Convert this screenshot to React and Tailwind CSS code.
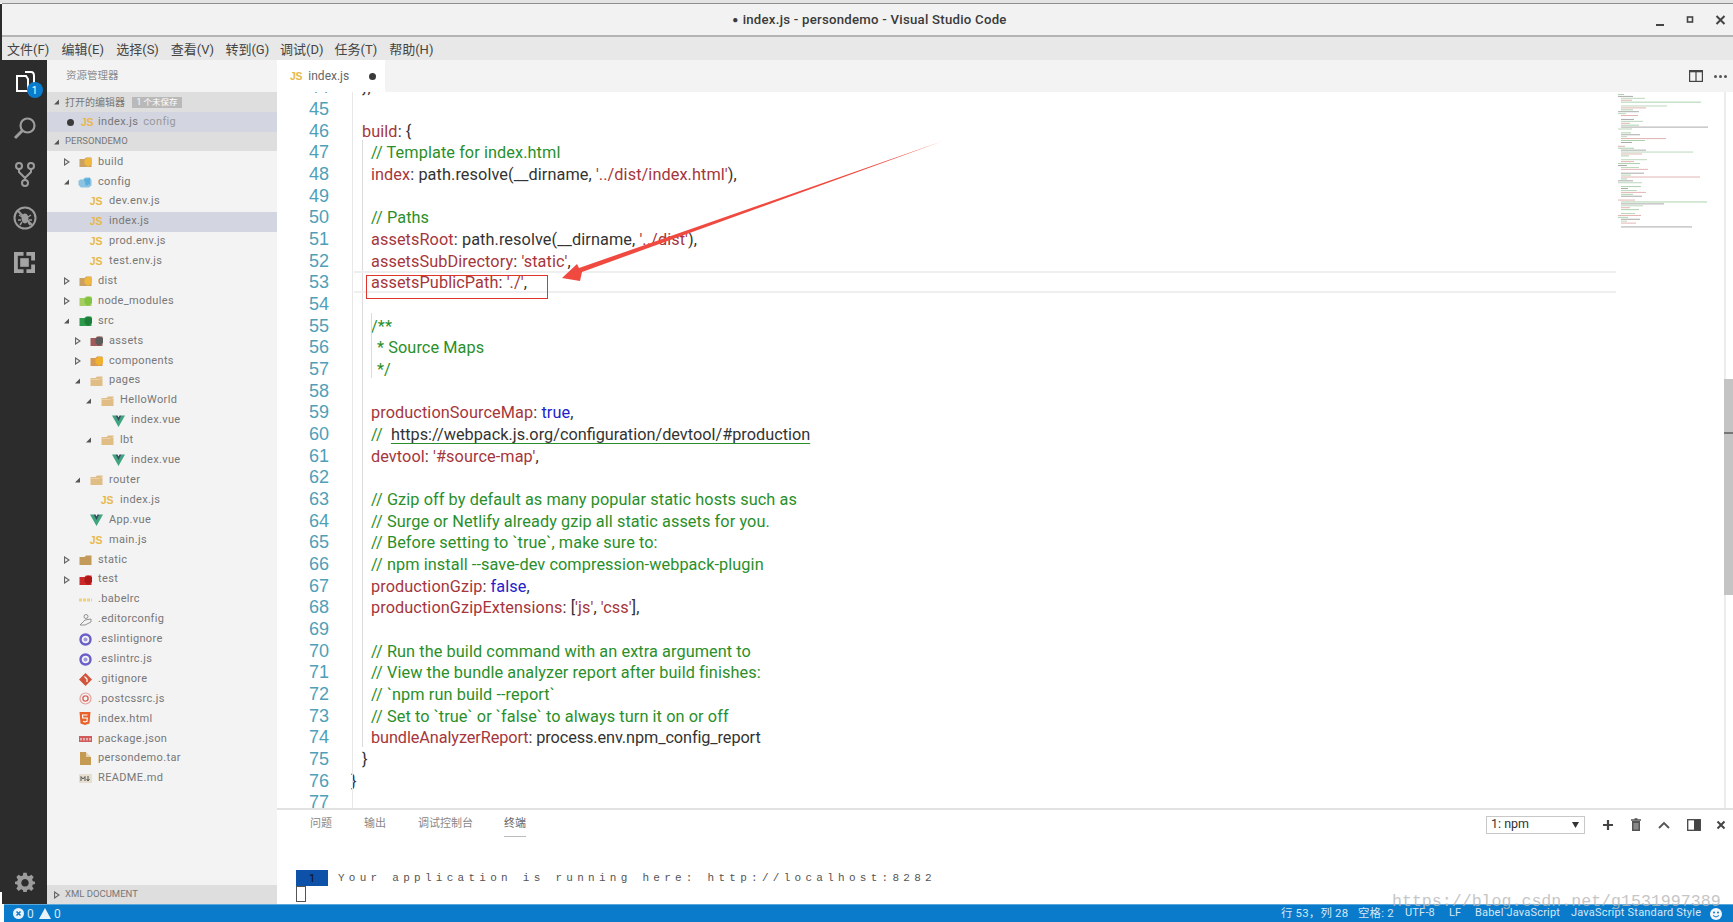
import React from "react";

const Tri = ({ open }) => (
  <svg width="6" height="8" viewBox="0 0 6 8" className="shrink-0">
    {open ? <path d="M0 6.5 L5 1.5 V6.5 Z" fill="#555" /> : <path d="M0.5 1 L5 4 L0.5 7 Z" fill="none" stroke="#666" strokeWidth="1.2" />}
  </svg>
);

const JS = () => (
  <span className="font-['Liberation_Sans'] font-bold text-[10.5px] text-[#e8b84a] shrink-0 leading-none tracking-tight whitespace-nowrap">JS</span>
);
const Vue = () => (
  <svg width="13" height="12" viewBox="0 0 13 12" className="shrink-0"><path d="M0 0.5 H3.5 L6.5 5 L9.5 0.5 H13 L6.5 12 Z" fill="#3fa57f" /><path d="M3.5 0.5 H5.5 L6.5 2.5 L7.5 0.5 H9.5 L6.5 6 Z" fill="#2f4a5c" /></svg>
);
const Folder = ({ c = "#e0bd85", c2, open }) => (
  <svg width="13" height="12" viewBox="0 0 13 12" className="shrink-0">
    <path d="M0.5 3 V11 H12.5 V1.5 H7 L5.5 3 Z" fill={c} />
    {open && <path d="M0.5 4.5 H9 L12.5 3 V4 H1 Z" fill="#f4e6cf" />}
    {c2 && <path d="M5.5 4 L9 1.5 L13 3 V8 L9 11 L5.5 8 Z" fill={c2} />}
  </svg>
);
const Cloud = () => (
  <svg width="14" height="12" viewBox="0 0 14 12" className="shrink-0">
    <path d="M0.5 5 L2 3.5 H5 L7 1.5 H12 L13.5 4 V9.5 L11 11.5 H3 L0.5 9 Z" fill="#8cc3e0" />
    <path d="M6 3 L12 2 V8 L8 10 Z" fill="#5aaedc" />
  </svg>
);
const Dot = ({ c }) => (
  <svg width="13" height="13" viewBox="0 0 13 13" className="shrink-0"><circle cx="6.5" cy="6.5" r="5" fill="none" stroke={c} strokeWidth="2.4" /><circle cx="6.5" cy="6.5" r="2" fill={c} opacity=".6" /></svg>
);
const Git = () => (
  <svg width="13" height="13" viewBox="0 0 13 13" className="shrink-0"><path d="M6.5 0 L13 6.5 L6.5 13 L0 6.5 Z" fill="#d2543a" /><path d="M5.5 3.5 L8 6 V9" stroke="#fff" strokeWidth="1.2" fill="none" /></svg>
);
const Post = () => (
  <svg width="13" height="13" viewBox="0 0 13 13" className="shrink-0"><circle cx="6.5" cy="6.5" r="5.5" fill="none" stroke="#e4a09a" strokeWidth="1.2" /><circle cx="6.5" cy="6.5" r="2.6" fill="none" stroke="#d9655c" strokeWidth="1.4" /></svg>
);
const Html = () => (
  <svg width="12" height="13" viewBox="0 0 12 13" className="shrink-0"><path d="M0.5 0 H11.5 L10.5 11.5 L6 13 L1.5 11.5 Z" fill="#e8622c" /><path d="M8.5 3 H3.5 L3.7 6 H8.3 L8 9.3 L6 10 L4 9.3" fill="none" stroke="#fff" strokeWidth="1.1" /></svg>
);
const Npm = () => (
  <svg width="13" height="6" viewBox="0 0 13 6" className="shrink-0"><rect width="13" height="6" fill="#cf5b5b" /><path d="M2 4.5 V2 M5 4.5 V2 M8 4.5 V2 M11 4.5 V2" stroke="#fff" strokeWidth="1" /></svg>
);
const Tar = () => (
  <svg width="11" height="13" viewBox="0 0 11 13" className="shrink-0"><path d="M0 0 H6 V5 H11 V13 H0 Z" fill="#c59a52" /><path d="M6 0 L11 5 H6 Z" fill="#e4d3ad" /></svg>
);
const Md = () => (
  <svg width="13" height="9" viewBox="0 0 13 9" className="shrink-0"><rect width="13" height="9" fill="#e6dfd0" /><path d="M2 7 V2.5 L4 5 L6 2.5 V7 M9 2 V7 M7.5 5 L9 7 L10.5 5" fill="none" stroke="#555" strokeWidth="1" /></svg>
);
const Babel = () => (
  <svg width="13" height="6" viewBox="0 0 13 6" className="shrink-0"><path d="M0 3 H13" stroke="#efd27a" strokeWidth="3" strokeDasharray="3 1" /></svg>
);
const Editor = () => (
  <svg width="13" height="13" viewBox="0 0 13 13" className="shrink-0" fill="none" stroke="#888" strokeWidth="0.9"><circle cx="7" cy="3.5" r="2" /><path d="M1 12 L6 7 L12 6 V9 L6 12 Z" /></svg>
);

const rows = [
  [0, "t", "build", <Folder c="#c9a263" c2="#f0b93e" />],
  [0, "o", "config", <Cloud />],
  [1, "", "dev.env.js", <JS />],
  [1, "", "index.js", <JS />, true],
  [1, "", "prod.env.js", <JS />],
  [1, "", "test.env.js", <JS />],
  [0, "t", "dist", <Folder c="#c9a263" c2="#f0b93e" />],
  [0, "t", "node_modules", <Folder c="#a5cd62" c2="#82c341" />],
  [0, "o", "src", <Folder c="#2e9a4c" c2="#1c7e39" />],
  [1, "t", "assets", <Folder c="#a05a5a" c2="#5c5c5c" />],
  [1, "t", "components", <Folder c="#d69a55" c2="#f0b030" />],
  [1, "o", "pages", <Folder open />],
  [2, "o", "HelloWorld", <Folder open />],
  [3, "", "index.vue", <Vue />],
  [2, "o", "lbt", <Folder open />],
  [3, "", "index.vue", <Vue />],
  [1, "o", "router", <Folder open />],
  [2, "", "index.js", <JS />],
  [1, "", "App.vue", <Vue />],
  [1, "", "main.js", <JS />],
  [0, "t", "static", <Folder c="#c49a5a" />],
  [0, "t", "test", <Folder c="#cc2a2a" c2="#b01818" />],
  [0, "", ".babelrc", <Babel />],
  [0, "", ".editorconfig", <Editor />],
  [0, "", ".eslintignore", <Dot c="#6a5fc9" />],
  [0, "", ".eslintrc.js", <Dot c="#6a5fc9" />],
  [0, "", ".gitignore", <Git />],
  [0, "", ".postcssrc.js", <Post />],
  [0, "", "index.html", <Html />],
  [0, "", "package.json", <Npm />],
  [0, "", "persondemo.tar", <Tar />],
  [0, "", "README.md", <Md />],
];

const Row = ({ lvl, kind, name, icon, sel }) => (
  <div className={`h-[19.9px] flex items-center text-[11px] tracking-[0.35px] text-[#777] whitespace-nowrap ${sel ? "bg-[#d3d5e1]" : ""}`} style={{ paddingLeft: 17 + lvl * 11 }}>
    <span className="w-[14px] shrink-0 flex items-center">{kind && <Tri open={kind === "o"} />}</span>
    <span className="w-[14px] shrink-0 flex items-center justify-center">{icon}</span>
    <span className="ml-[6px]">{name}</span>
  </div>
);

const K = ({ children }) => <span className="text-[#a5363c]">{children}</span>;
const S = ({ children }) => <span className="text-[#a5363c]">{children}</span>;
const C = ({ children }) => <span className="text-[#2a8f2a]">{children}</span>;
const B = ({ children }) => <span className="text-[#2222c8]">{children}</span>;

const code = [
  [44, 11, <>{"},"}</>],
  [45, 0, null],
  [46, 11, <><K>build</K>: {"{"}</>],
  [47, 20, <C>// Template for index.html</C>],
  [48, 20, <><K>index</K>: path.resolve(__dirname, <S>'../dist/index.html'</S>),</>],
  [49, 0, null],
  [50, 20, <C>// Paths</C>],
  [51, 20, <><K>assetsRoot</K>: path.resolve(__dirname, <S>'../dist'</S>),</>],
  [52, 20, <><K>assetsSubDirectory</K>: <S>'static'</S>,</>],
  [53, 20, <><K>assetsPublicPath</K>: <S>'./'</S>,</>],
  [54, 0, null],
  [55, 20, <C>/**</C>],
  [56, 26, <C>* Source Maps</C>],
  [57, 26, <C>*/</C>],
  [58, 0, null],
  [59, 20, <><K>productionSourceMap</K>: <B>true</B>,</>],
  [60, 20, <><C>// </C><span className="ml-[4px] tracking-[0px] text-[#333] underline decoration-[#2a8f2a] underline-offset-[3px]">https://webpack.js.org/configuration/devtool/#production</span></>],
  [61, 20, <><K>devtool</K>: <S>'#source-map'</S>,</>],
  [62, 0, null],
  [63, 20, <C>// Gzip off by default as many popular static hosts such as</C>],
  [64, 20, <C>// Surge or Netlify already gzip all static assets for you.</C>],
  [65, 20, <C>// Before setting to `true`, make sure to:</C>],
  [66, 20, <C>// npm install --save-dev compression-webpack-plugin</C>],
  [67, 20, <><K>productionGzip</K>: <B>false</B>,</>],
  [68, 20, <><K>productionGzipExtensions</K>: [<S>'js'</S>, <S>'css'</S>],</>],
  [69, 0, null],
  [70, 20, <C>// Run the build command with an extra argument to</C>],
  [71, 20, <C>// View the bundle analyzer report after build finishes:</C>],
  [72, 20, <C>// `npm run build --report`</C>],
  [73, 20, <C>// Set to `true` or `false` to always turn it on or off</C>],
  [74, 20, <span className="tracking-[-0.1px]"><K>bundleAnalyzerReport</K>: process.env.npm_config_report</span>],
  [75, 11, <>{"}"}</>],
  [76, 0, <>{"}"}</>],
  [77, 0, null],
];

const miniColors = ["#4a9e4a", "#c25a5a", "#6aa86a", "#444"];
const mini = [];
for (let i = 0; i < 70; i++) {
  const seed = (i * 37) % 7;
  if (seed === 3) continue;
  const w = 6 + ((i * 53) % 22) + (i % 13 === 4 ? 60 : 0) + (i % 17 === 6 ? 30 : 0);
  mini.push([i % 9 < 2 ? 2 : 5, 2 + i * 1.92, w, miniColors[(i * 7) % 4]]);
}

const Menu = ["文件(F)", "编辑(E)", "选择(S)", "查看(V)", "转到(G)", "调试(D)", "任务(T)", "帮助(H)"];

export default function App() {
  return (
    <div className="relative w-[1733px] h-[922px] overflow-hidden bg-white font-['Roboto','Noto_Sans_CJK_SC',sans-serif] text-[#333]">
      <div className="h-[3px] bg-[#e4e4e4]" />
      <div className="h-px bg-[#8f8f8f] ml-[2px]" />
      <div className="flex h-[918px]">
        <div className="w-[2px] bg-[#2c2c2c] h-[888px] shrink-0" />
        <div className="flex-1 flex flex-col min-w-0">
          {/* title bar */}
          <div className="relative h-[33px] bg-[#f2f2f2] border-b-2 border-[#b4b4b4] flex items-center justify-center pl-[4px] shrink-0">
            <span className="text-[13.2px] font-medium text-[#3a3a3a] tracking-[0.25px] whitespace-nowrap"><span className="text-[10px] mr-[4px] align-[1px] font-['Liberation_Sans']">●</span>index.js - persondemo - Visual Studio Code</span>
            <div className="absolute right-[6px] top-0 bottom-0 flex items-center gap-[17px]">
              <svg width="13" height="14" viewBox="0 0 13 14"><path d="M2 12 H10" stroke="#444" strokeWidth="2" /></svg>
              <svg width="13" height="14" viewBox="0 0 13 14"><rect x="3.5" y="4" width="5" height="5" fill="none" stroke="#444" strokeWidth="1.6" /></svg>
              <svg width="13" height="14" viewBox="0 0 13 14"><path d="M2.5 3 L10.5 11 M10.5 3 L2.5 11" stroke="#444" strokeWidth="2" /></svg>
            </div>
          </div>
          {/* menu */}
          <div className="h-[23px] bg-[#e8e8e8] flex items-center gap-[10.6px] pl-[5px] pt-[2px] text-[13px] text-[#444] shrink-0">
            {Menu.map((m) => <span key={m} className="w-[44px] whitespace-nowrap">{m}</span>)}
          </div>
          <div className="flex-1 flex min-h-0">
            {/* activity bar */}
            <div className="w-[45px] bg-[#2c2c2c] h-[844px] shrink-0 flex flex-col items-center pt-[10px]">
              <div className="relative h-[24px] mb-[22px]">
                <svg width="24" height="24" viewBox="0 0 24 24" fill="none" stroke="#fff" strokeWidth="2"><path d="M12 2 H18 Q21 2 21 6 V17" /><path d="M4 6 H13 L15 9 V21 H4 Z" fill="#2c2c2c" /></svg>
                <span className="absolute -right-[6px] top-[12px] w-[16px] h-[16px] rounded-full bg-[#0a7ccc] text-white text-[10px] flex items-center justify-center">1</span>
              </div>
              <div className="h-[24px] mb-[21px]">
                <svg width="24" height="24" viewBox="0 0 24 24" fill="none" stroke="#9c9c9c" strokeWidth="2.2"><circle cx="14.5" cy="9.5" r="7" /><path d="M9.5 14.5 L2 22" strokeWidth="3" /></svg>
              </div>
              <div className="h-[24px] mb-[21px]">
                <svg width="24" height="26" viewBox="0 0 24 26" fill="none" stroke="#9c9c9c" strokeWidth="2"><circle cx="6" cy="5" r="3" /><circle cx="18" cy="5" r="3" /><circle cx="12" cy="22" r="3" /><path d="M6 8 V11 L12 17 V19 M18 8 V11 L12 17" /></svg>
              </div>
              <div className="h-[24px] mb-[22px]">
                <svg width="24" height="24" viewBox="0 0 24 24" fill="none" stroke="#9c9c9c" strokeWidth="2"><circle cx="12" cy="12" r="10.5" /><path d="M5 5 L19 19" /><ellipse cx="12" cy="12.5" rx="3.5" ry="5" fill="#9c9c9c" stroke="none" /><path d="M6 9 L9 11 M18 9 L15 11 M5 14 H8 M19 14 H16 M7 19 L9 16 M17 19 L15 16" strokeWidth="1.4" /></svg>
              </div>
              <div className="h-[24px]">
                <svg width="21" height="21" viewBox="0 0 22 22"><path d="M0 0 H10 V4 H4 V18 H10 V22 H0 Z M13 0 H22 V9 H18 V4 H13 Z M13 22 H22 V13 H18 V18 H13 Z" fill="#a4a4a4" /><rect x="6.5" y="6.5" width="9" height="9" fill="#a4a4a4" /></svg>
              </div>
              <svg className="mt-auto mb-[12px]" width="20" height="20" viewBox="0 0 24 24" fill="#9c9c9c"><path d="M10 1 H14 L14.6 4.3 L16.8 5.2 L19.6 3.3 L22.4 6.1 L20.5 8.9 L21.4 11 L24 11.6 V14.4 L21.4 15 L20.5 17.1 L22.4 19.9 L19.6 22.7 L16.8 20.8 L14.6 21.7 L14 24 H10 L9.4 21.7 L7.2 20.8 L4.4 22.7 L1.6 19.9 L3.5 17.1 L2.6 15 L0 14.4 V11.6 L2.6 11 L3.5 8.9 L1.6 6.1 L4.4 3.3 L7.2 5.2 L9.4 4.3 Z M12 8.5 A4.5 4.5 0 1 0 12.01 8.5 Z" fillRule="evenodd" /></svg>
            </div>
            {/* sidebar */}
            <div className="w-[230px] h-[844px] bg-[#f3f3f3] shrink-0 flex flex-col">
              <div className="h-[32px] flex items-center pl-[19px] text-[10.5px] text-[#8c8c8c] shrink-0">资源管理器</div>
              <div className="h-[20px] bg-[#dedede] flex items-center pl-[7px] text-[10px] text-[#777] shrink-0 whitespace-nowrap">
                <Tri open />
                <span className="ml-[5px]">打开的编辑器</span>
                <span className="ml-[7px] w-[50px] h-[11px] bg-[#b9b9b9] text-white text-[8.5px] flex items-center justify-center">1 个未保存</span>
              </div>
              <div className="h-[20px] bg-[#d3d5e1] flex items-center pl-[20px] text-[11px] tracking-[0.35px] text-[#777] shrink-0 whitespace-nowrap">
                <span className="w-[7px] h-[7px] rounded-full bg-[#3a3a3a]" />
                <span className="ml-[7px] w-[17px] flex items-center"><JS /></span>
                <span>index.js</span>
                <span className="ml-[5px] text-[#999]">config</span>
              </div>
              <div className="h-[19px] bg-[#dedede] flex items-center pl-[7px] text-[9.5px] text-[#777] shrink-0 whitespace-nowrap">
                <Tri open />
                <span className="ml-[5px]">PERSONDEMO</span>
              </div>
              <div className="pt-[1px]">
                {rows.map((r, i) => <Row key={i} lvl={r[0]} kind={r[1]} name={r[2]} icon={r[3]} sel={r[4]} />)}
              </div>
              <div className="mt-auto h-[19px] bg-[#dedede] flex items-center pl-[7px] text-[9.5px] text-[#777] shrink-0 whitespace-nowrap">
                <Tri />
                <span className="ml-[5px]">XML DOCUMENT</span>
              </div>
            </div>
            {/* main */}
            <div className="flex-1 flex flex-col min-w-0">
              <div className="h-[32px] bg-[#f3f3f3] flex items-center shrink-0 pr-[6px]">
                <div className="w-[108px] h-full bg-white flex items-center pl-[13px] text-[12px] text-[#666] whitespace-nowrap">
                  <JS />
                  <span className="ml-[6px]">index.js</span>
                  <span className="ml-[20px] w-[7px] h-[7px] rounded-full bg-[#3a3a3a]" />
                </div>
                <svg className="ml-auto" width="14" height="14" viewBox="0 0 14 14" fill="none" stroke="#444" strokeWidth="1.2"><rect x="0.6" y="1.6" width="12.8" height="10.8" /><path d="M0.6 2.4 H13.4" strokeWidth="1.8" /><path d="M7 2 V12" /></svg>
                <div className="ml-[11px] flex gap-[2px]">
                  <span className="w-[3px] h-[3px] rounded-full bg-[#555]" /><span className="w-[3px] h-[3px] rounded-full bg-[#555]" /><span className="w-[3px] h-[3px] rounded-full bg-[#555]" />
                </div>
              </div>
              {/* editor */}
              <div className="relative h-[716px] shrink-0 overflow-hidden border-r-2 border-[#ececec] mr-[7px]">
                <div className="-mt-[14.7px] text-[16.3px]">
                  {code.map(([n, ind, c]) => (
                    <div key={n} className="flex h-[21.68px] leading-[21.68px] whitespace-nowrap">
                      <span className="w-[52px] shrink-0 text-right text-[18px] text-[#4f9fb8] font-['Liberation_Sans']">{n}</span>
                      <span className="text-[#333] tracking-[0.08px]" style={{ marginLeft: 22 + ind }}>{c}</span>
                    </div>
                  ))}
                </div>
                {/* gutter and guides */}
                <div className="absolute left-[75px] top-0 bottom-0 w-px bg-[#e8e8e8]" />
                <div className="absolute left-[85px] top-[48px] h-[607px] w-px bg-[#dcdcdc]" />
                <div className="absolute left-[94px] top-[221px] h-[65px] w-px bg-[#dcdcdc]" />
                {/* current line */}
                <div className="absolute left-[77px] right-[108px] top-[179px] h-[22px] border-y-2 border-[#efefef]" />
                {/* minimap */}
                <svg className="absolute right-[4px] top-0" width="104" height="146" viewBox="0 0 104 146">
                  {mini.map(([x, y, w, c], i) => <rect key={i} x={x} y={y} width={w} height="0.9" fill={c} opacity=".5" />)}
                </svg>
              </div>
              {/* panel */}
              <div className="flex-1 border-t-2 border-[#e2e2e2] min-h-0">
                <div className="flex h-[29px] items-center pl-[33px] pr-[7px] text-[11px] text-[#888] whitespace-nowrap">
                  <span className="w-[54px]">问题</span>
                  <span className="w-[54px]">输出</span>
                  <span className="w-[86px]">调试控制台</span>
                  <span className="relative text-[#666]">终端<span className="absolute left-0 right-0 -bottom-[4px] h-px bg-[#bbb]" /></span>
                  <div className="relative ml-auto w-[99px] h-[18px] border border-[#c8c8c8] bg-white flex items-center pl-[4px] text-[12.5px] text-[#333]">
                    1: npm
                    <svg className="absolute right-[5px] top-[5px]" width="7" height="6" viewBox="0 0 7 6"><path d="M0 0 H7 L3.5 6 Z" fill="#333" /></svg>
                  </div>
                  <div className="ml-[17px] flex items-center gap-[15.5px]">
                    <svg width="12" height="12" viewBox="0 0 12 12"><path d="M6 1 V11 M1 6 H11" stroke="#444" strokeWidth="2.2" /></svg>
                    <svg width="12" height="14" viewBox="0 0 12 14"><path d="M2 3 H10 V13 H2 Z" fill="#555" /><path d="M1 2 H11 M4.5 1 H7.5" stroke="#555" strokeWidth="1.3" /><rect x="3.5" y="5" width="5" height="6.5" fill="#888" /></svg>
                    <svg width="14" height="10" viewBox="0 0 14 10"><path d="M2 8 L7 3 L12 8" fill="none" stroke="#555" strokeWidth="1.8" /></svg>
                    <svg width="14" height="12" viewBox="0 0 14 12"><rect x="0.7" y="0.7" width="12.6" height="10.6" fill="none" stroke="#444" strokeWidth="1.3" /><rect x="7" y="1" width="6" height="10" fill="#444" /></svg>
                    <svg width="10" height="10" viewBox="0 0 10 10"><path d="M1.5 1.5 L8.5 8.5 M8.5 1.5 L1.5 8.5" stroke="#444" strokeWidth="2" /></svg>
                  </div>
                </div>
                <div className="mt-[31px] ml-[19px] flex items-start">
                  <div>
                    <div className="w-[32px] h-[16px] bg-[#0d51a8] flex items-center justify-center text-[11px] text-[#111] leading-none">1</div>
                    <div className="w-[10px] h-[16px] border border-[#555] bg-white" />
                  </div>
                  <span className="ml-[10px] mt-[1px] text-[11px] text-[#555] tracking-[4.27px] font-['Liberation_Mono'] whitespace-nowrap leading-[14px]">Your application is running here: http://localhost:8282</span>
                </div>
              </div>
            </div>
          </div>
        </div>
      </div>
      {/* scrollbar */}
      <div className="absolute right-0 top-[379px] w-[9px] h-[216px] bg-[#c4c4c4]">
        <div className="mt-[53px] h-[2px] bg-[#777]" />
      </div>
      {/* status bar */}
      <div className="absolute left-[4px] right-0 bottom-0 h-[18px] bg-[#0a7acb] border-t border-[#5aa7dc] flex items-center text-[11px] text-[#d5e8f5] tracking-[0.2px] pr-[11px] whitespace-nowrap">
        <svg className="ml-[9px]" width="11" height="11" viewBox="0 0 11 11"><circle cx="5.5" cy="5.5" r="5.5" fill="#e8f2fa" /><path d="M3.5 3.5 L7.5 7.5 M7.5 3.5 L3.5 7.5" stroke="#0a7acb" strokeWidth="1.5" /></svg>
        <span className="ml-[3px] text-[12px]">0</span>
        <svg className="ml-[5px]" width="12" height="11" viewBox="0 0 12 11"><path d="M6 0 L12 11 H0 Z" fill="#e8f2fa" /></svg>
        <span className="ml-[3px] text-[12px]">0</span>
        <span className="ml-auto w-[77px] text-[11.4px]">行 53，列 28</span>
        <span className="w-[47px] text-[11.4px]">空格: 2</span>
        <span className="w-[44px]">UTF-8</span>
        <span className="w-[26px]">LF</span>
        <span className="w-[96px]">Babel JavaScript</span>
        <span className="w-[139px]">JavaScript Standard Style</span>
        <svg width="12" height="12" viewBox="0 0 12 12"><circle cx="6" cy="6" r="6" fill="#f3f7fb" /><circle cx="4" cy="4.5" r="1" fill="#0a7acb" /><circle cx="8" cy="4.5" r="1" fill="#0a7acb" /><path d="M3 7.5 Q6 10.5 9 7.5" stroke="#0a7acb" fill="none" /></svg>
      </div>
      {/* watermark */}
      <span className="absolute left-[1392px] top-[892px] text-[16.6px] leading-[20px] text-[#b9b9b9] opacity-80 font-['Liberation_Mono'] whitespace-nowrap">https://blog.csdn.net/g1531997389</span>
      {/* annotation */}
      <div className="absolute left-[366px] top-[275px] w-[182px] h-[24px] border border-[#e0352b]" />
      <svg className="absolute left-0 top-0 pointer-events-none" width="1733" height="922">
        <path d="M943 141 L582 272 L580 281 L562 278 L577 264 L579 268 Z" fill="#f04a40" />
      </svg>
    </div>
  );
}
